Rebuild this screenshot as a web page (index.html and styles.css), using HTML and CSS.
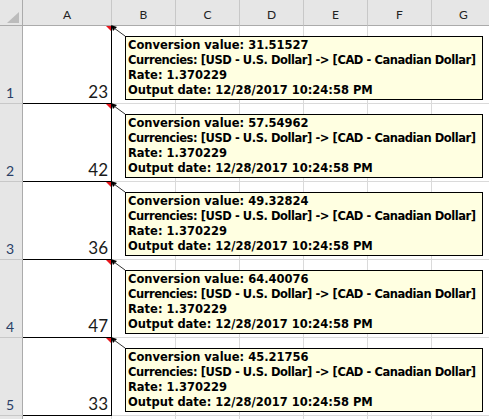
FILE: index.html
```html
<!DOCTYPE html>
<html>
<head>
<meta charset="utf-8">
<link rel="stylesheet" href="styles.css">
</head>
<body>
<div class="sheet">
  <div class="corner"><span class="corner-tri"></span></div>
  <div class="colhead">A</div>
  <div class="colhead">B</div>
  <div class="colhead">C</div>
  <div class="colhead">D</div>
  <div class="colhead">E</div>
  <div class="colhead">F</div>
  <div class="colhead">G</div>

  <div class="rowhead">1</div>
  <div class="cell a"><span class="val">23</span><span class="flag"></span>
    <svg class="leader" width="15" height="12" viewBox="0 0 15 12"><polygon points="0,0 6,2 2,6" fill="#000"/><line x1="3" y1="3" x2="14" y2="11" stroke="#333" stroke-width="1"/></svg>
    <div class="note"><div class="ln">Conversion value: 31.51527</div><div class="ln cur">Currencies: [USD - U.S. Dollar] -&gt; [CAD - Canadian Dollar]</div><div class="ln">Rate: 1.370229</div><div class="ln">Output date: 12/28/2017 10:24:58 PM</div></div>
  </div>
  <div class="cell"></div><div class="cell"></div><div class="cell"></div><div class="cell"></div><div class="cell"></div><div class="cell"></div>

  <div class="rowhead">2</div>
  <div class="cell a"><span class="val">42</span><span class="flag"></span>
    <svg class="leader" width="15" height="12" viewBox="0 0 15 12"><polygon points="0,0 6,2 2,6" fill="#000"/><line x1="3" y1="3" x2="14" y2="11" stroke="#333" stroke-width="1"/></svg>
    <div class="note"><div class="ln">Conversion value: 57.54962</div><div class="ln cur">Currencies: [USD - U.S. Dollar] -&gt; [CAD - Canadian Dollar]</div><div class="ln">Rate: 1.370229</div><div class="ln">Output date: 12/28/2017 10:24:58 PM</div></div>
  </div>
  <div class="cell"></div><div class="cell"></div><div class="cell"></div><div class="cell"></div><div class="cell"></div><div class="cell"></div>

  <div class="rowhead">3</div>
  <div class="cell a"><span class="val">36</span><span class="flag"></span>
    <svg class="leader" width="15" height="12" viewBox="0 0 15 12"><polygon points="0,0 6,2 2,6" fill="#000"/><line x1="3" y1="3" x2="14" y2="11" stroke="#333" stroke-width="1"/></svg>
    <div class="note"><div class="ln">Conversion value: 49.32824</div><div class="ln cur">Currencies: [USD - U.S. Dollar] -&gt; [CAD - Canadian Dollar]</div><div class="ln">Rate: 1.370229</div><div class="ln">Output date: 12/28/2017 10:24:58 PM</div></div>
  </div>
  <div class="cell"></div><div class="cell"></div><div class="cell"></div><div class="cell"></div><div class="cell"></div><div class="cell"></div>

  <div class="rowhead">4</div>
  <div class="cell a"><span class="val">47</span><span class="flag"></span>
    <svg class="leader" width="15" height="12" viewBox="0 0 15 12"><polygon points="0,0 6,2 2,6" fill="#000"/><line x1="3" y1="3" x2="14" y2="11" stroke="#333" stroke-width="1"/></svg>
    <div class="note"><div class="ln">Conversion value: 64.40076</div><div class="ln cur">Currencies: [USD - U.S. Dollar] -&gt; [CAD - Canadian Dollar]</div><div class="ln">Rate: 1.370229</div><div class="ln">Output date: 12/28/2017 10:24:58 PM</div></div>
  </div>
  <div class="cell"></div><div class="cell"></div><div class="cell"></div><div class="cell"></div><div class="cell"></div><div class="cell"></div>

  <div class="rowhead">5</div>
  <div class="cell a"><span class="val">33</span><span class="flag"></span>
    <svg class="leader" width="15" height="12" viewBox="0 0 15 12"><polygon points="0,0 6,2 2,6" fill="#000"/><line x1="3" y1="3" x2="14" y2="11" stroke="#333" stroke-width="1"/></svg>
    <div class="note"><div class="ln">Conversion value: 45.21756</div><div class="ln cur">Currencies: [USD - U.S. Dollar] -&gt; [CAD - Canadian Dollar]</div><div class="ln">Rate: 1.370229</div><div class="ln">Output date: 12/28/2017 10:24:58 PM</div></div>
  </div>
  <div class="cell"></div><div class="cell"></div><div class="cell"></div><div class="cell"></div><div class="cell"></div><div class="cell"></div>

  <div class="rowhead"></div>
  <div class="cell"></div><div class="cell"></div><div class="cell"></div><div class="cell"></div><div class="cell"></div><div class="cell"></div><div class="cell"></div>
</div>
</body>
</html>
```
FILE: styles.css
```css
html, body {
  margin: 0;
  padding: 0;
  background: #fff;
  overflow: hidden;
}

.sheet {
  display: grid;
  grid-template-columns: 23px 89px repeat(6, 64px);
  grid-template-rows: 26px repeat(5, 78px) 30px;
  width: 489px;
  height: 419px;
  overflow: hidden;
  font-family: Lato, "Open Sans", sans-serif;
}

.sheet > div {
  box-sizing: border-box;
}

.corner {
  background: #e6e6e6;
  border-right: 1px solid #ababab;
  border-bottom: 1px solid #ababab;
  position: relative;
}

.corner-tri {
  position: absolute;
  right: 3px;
  bottom: 2px;
  width: 0;
  height: 0;
  border-left: 12px solid transparent;
  border-bottom: 11px solid #bcbcbc;
}

.colhead {
  background: #e6e6e6;
  border-right: 1px solid #c8c8c8;
  border-bottom: 1px solid #ababab;
  display: flex;
  align-items: center;
  justify-content: center;
  padding-top: 4px;
  font-size: 12px;
  color: #222;
}

.rowhead {
  background: #e6e6e6;
  border-right: 1px solid #ababab;
  border-bottom: 1px solid #c8c8c8;
  display: flex;
  align-items: flex-end;
  padding: 0 0 3px 6px;
  font-size: 14px;
  line-height: 14px;
  color: #2a3f66;
}

.cell {
  border-right: 1px solid #dadada;
  border-bottom: 1px solid #dadada;
}

.cell.a {
  border-right-color: #000;
  border-bottom-color: #000;
  position: relative;
  display: flex;
  align-items: flex-end;
  justify-content: flex-end;
  padding: 0 3px 3px 0;
  font-size: 17px;
  line-height: 17px;
  color: #1a1a1a;
}

.flag {
  position: absolute;
  top: 0;
  right: 0;
  width: 0;
  height: 0;
  border-top: 5px solid #e8141b;
  border-left: 5px solid transparent;
}

.leader {
  position: absolute;
  left: 88px;
  top: -1px;
  overflow: visible;
  z-index: 2;
}

.note {
  position: absolute;
  left: 102px;
  top: 10px;
  width: 358px;
  height: 64px;
  box-sizing: border-box;
  border: 1px solid #000;
  background: #ffffe1;
  padding: 1px 2px;
  font-family: "DejaVu Sans", Verdana, sans-serif;
  font-weight: bold;
  font-size: 11.5px;
  line-height: 15px;
  color: #000;
  white-space: nowrap;
  z-index: 3;
}

.ln {
  height: 15px;
}

.ln.cur {
  letter-spacing: -0.44px;
}
```
